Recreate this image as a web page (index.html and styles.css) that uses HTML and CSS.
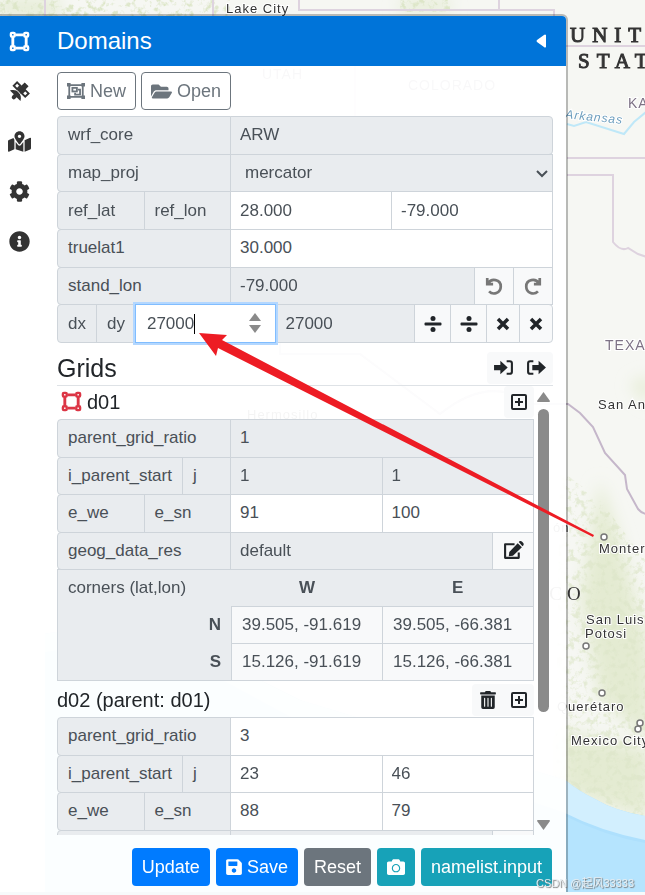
FILE: index.html
```html
<!DOCTYPE html>
<html lang="en">
<head>
    <meta charset="UTF-8">
    <meta name="viewport" content="width=device-width, initial-scale=1.0">
    <title>Domains</title>
    <link rel="stylesheet" href="styles.css">
</head>
<body>
    <!-- shared icon shapes -->
    <svg class="sprite" aria-hidden="true">
        <symbol id="i-domain" viewBox="0 0 22 22">
            <g fill="none" stroke="currentColor">
                <path d="M7 4h8M7 18h8M4 7v8M18 7v8" stroke-width="3"/>
                <g stroke-width="2.500">
                    <rect x="2" y="2" width="4" height="4" rx="1"/>
                    <rect x="16" y="2" width="4" height="4" rx="1"/>
                    <rect x="2" y="16" width="4" height="4" rx="1"/>
                    <rect x="16" y="16" width="4" height="4" rx="1"/>
                </g>
            </g>
        </symbol>
        <symbol id="i-satellite" viewBox="0 0 22 22">
            <g fill="none" stroke="currentColor" stroke-width="2">
                <path d="M8.500 1.500l3.500 3.500-3.500 3.500L5 5zM17 9.500l3.500 3.500-3.500 3.500-3.500-3.500z"/>
            </g>
            <path fill="currentColor" d="M14.500 3.500l4 4-6 6-4-4zM16.500 1.500l4 4-2 2-4-4zM1 10c4-1 6.500-.5 9 2 2.500 2.500 3 5 2 9l-4-4-1.500 1.500a2 2 0 0 1-3-3L5 14z"/>
        </symbol>
        <symbol id="i-map" viewBox="0 0 576 512"><path fill="currentColor" d="M288 0c-69.59 0-126 56.41-126 126 0 56.26 82.35 158.8 113.9 196.02 6.39 7.54 17.82 7.54 24.2 0C331.65 284.8 414 182.26 414 126 414 56.41 357.59 0 288 0zm0 168c-23.2 0-42-18.8-42-42s18.8-42 42-42 42 18.8 42 42-18.8 42-42 42zM20.12 215.95A32.006 32.006 0 0 0 0 245.66v250.32c0 11.32 11.43 19.06 21.94 14.86L160 448V214.92c-8.84-15.98-16.07-31.54-21.25-46.42L20.12 215.95zM288 359.67c-14.07 0-27.38-6.18-36.51-16.96-19.66-23.2-40.57-49.62-59.49-76.72v182l192 64V266c-18.92 27.09-39.82 53.52-59.49 76.72-9.13 10.77-22.44 16.95-36.51 16.95zm266.06-198.51L416 224v288l139.88-55.95A31.996 31.996 0 0 0 576 426.34V176.02c0-11.32-11.43-19.06-21.94-14.86z"/></symbol>
        <symbol id="i-cog" viewBox="0 0 512 512"><path fill="currentColor" d="M487.4 315.7l-42.6-24.6c4.3-23.2 4.3-47 0-70.2l42.6-24.6c4.9-2.8 7.1-8.6 5.5-14-11.1-35.6-30-67.8-54.7-94.6-3.8-4.1-10-5.1-14.8-2.3L380.8 110c-17.9-15.4-38.5-27.3-60.8-35.1V25.8c0-5.6-3.9-10.5-9.4-11.7-36.7-8.2-74.3-7.8-109.2 0-5.5 1.2-9.4 6.1-9.4 11.7V75c-22.2 7.9-42.8 19.8-60.8 35.1L88.7 85.5c-4.9-2.8-11-1.9-14.8 2.3-24.7 26.7-43.6 58.9-54.7 94.6-1.7 5.4.6 11.2 5.5 14L67.3 221c-4.3 23.2-4.3 47 0 70.2l-42.6 24.6c-4.9 2.8-7.1 8.6-5.5 14 11.1 35.6 30 67.8 54.7 94.6 3.8 4.1 10 5.1 14.8 2.3l42.6-24.6c17.9 15.4 38.5 27.3 60.8 35.1v49.2c0 5.6 3.9 10.5 9.4 11.7 36.7 8.2 74.3 7.8 109.2 0 5.5-1.2 9.4-6.1 9.4-11.7v-49.2c22.2-7.9 42.8-19.8 60.8-35.1l42.6 24.6c4.9 2.8 11 1.9 14.8-2.3 24.7-26.7 43.6-58.9 54.7-94.6 1.500-5.500-.7-11.300-5.600-14.100zM256 336c-44.1 0-80-35.900-80-80s35.900-80 80-80 80 35.900 80 80-35.900 80-80 80z"/></symbol>
        <symbol id="i-info" viewBox="0 0 512 512"><path fill="currentColor" d="M256 8C119.043 8 8 119.083 8 256c0 136.997 111.043 248 248 248s248-111.003 248-248C504 119.083 392.957 8 256 8zm0 110c23.196 0 42 18.804 42 42s-18.804 42-42 42-42-18.804-42-42 18.804-42 42-42zm56 254c0 6.627-5.373 12-12 12h-88c-6.627 0-12-5.373-12-12v-24c0-6.627 5.373-12 12-12h12v-64h-12c-6.627 0-12-5.373-12-12v-24c0-6.627 5.373-12 12-12h64c6.627 0 12 5.373 12 12v100h12c6.627 0 12 5.373 12 12v24z"/></symbol>
        <symbol id="i-group" viewBox="0 0 20 18">
            <g fill="none" stroke="currentColor" stroke-width="2">
                <path d="M3 2.500h14M3 15.500h14M2.500 3v12M17.500 3v12"/>
                <rect x="6" y="5.500" width="5" height="4"/>
                <path d="M12 7.500h2.500V13H9v-2"/>
            </g>
            <path fill="currentColor" d="M0 0h4v4H0zM16 0h4v4h-4zM0 14h4v4H0zM16 14h4v4h-4z"/>
        </symbol>
        <symbol id="i-folder" viewBox="0 0 576 512"><path fill="currentColor" d="M572.694 292.093L500.27 416.248A63.997 63.997 0 0 1 444.989 448H45.025c-18.523 0-30.064-20.093-20.731-36.093l72.424-124.155A64 64 0 0 1 152 256h399.964c18.523 0 30.064 20.093 20.73 36.093zM152 224h328v-48c0-26.510-21.490-48-48-48H272l-64-64H48C21.490 64 0 85.490 0 112v278.046l69.077-118.418C86.214 242.250 117.989 224 152 224z"/></symbol>
        <symbol id="i-undo" viewBox="0 0 20 20"><path fill="none" stroke="currentColor" stroke-width="3" d="M2.500 1v7H9M3.500 7C7 1 17.500 2.500 17.500 10.500 17.500 18 9 20.500 4.500 16"/></symbol>
        <symbol id="i-divide" viewBox="0 0 18 18"><path fill="currentColor" d="M1.500 7.500h15a1 1 0 0 1 1 1v1a1 1 0 0 1-1 1h-15a1 1 0 0 1-1-1v-1a1 1 0 0 1 1-1z"/><circle cx="9" cy="3.500" r="2.500" fill="currentColor"/><circle cx="9" cy="14.500" r="2.500" fill="currentColor"/></symbol>
        <symbol id="i-times" viewBox="0 0 16 16"><path stroke="currentColor" stroke-width="3.500" d="M3 3l10 10M13 3L3 13"/></symbol>
        <symbol id="i-import" viewBox="0 0 20 16"><path fill="currentColor" d="M1 5.500h6V1.500l7 6.500-7 6.500v-4H1z"/><path fill="none" stroke="currentColor" stroke-width="2" stroke-linejoin="round" d="M13 2h3q2 0 2 2v8q0 2-2 2h-3"/></symbol>
        <symbol id="i-export" viewBox="0 0 20 16"><path fill="currentColor" d="M6 5.500h6V1.500l7 6.500-7 6.500v-4H6z"/><path fill="none" stroke="currentColor" stroke-width="2" stroke-linejoin="round" d="M7 2H4Q2 2 2 4v8q0 2 2 2h3"/></symbol>
        <symbol id="i-plus" viewBox="0 0 16 16"><rect x="1" y="1" width="14" height="14" rx="1" fill="none" stroke="currentColor" stroke-width="2"/><path stroke="currentColor" stroke-width="2" d="M8 4v8M4 8h8"/></symbol>
        <symbol id="i-edit" viewBox="0 0 20 18"><path fill="none" stroke="currentColor" stroke-width="2" stroke-linejoin="round" d="M11 3H2v13h13v-5"/><path fill="currentColor" d="M14 2l4 4-8.500 8-4 .5.500-4zM15 1l1-1q1-.5 2 .5l1.500 1.500q.5 1 0 2L18.500 5z"/></symbol>
        <symbol id="i-trash" viewBox="0 0 448 512"><path fill="currentColor" d="M32 464a48 48 0 0 0 48 48h288a48 48 0 0 0 48-48V128H32zm272-256a16 16 0 0 1 32 0v224a16 16 0 0 1-32 0zm-96 0a16 16 0 0 1 32 0v224a16 16 0 0 1-32 0zm-96 0a16 16 0 0 1 32 0v224a16 16 0 0 1-32 0zM432 32H312l-9.400-18.700A24 24 0 0 0 281.100 0H166.800a23.720 23.720 0 0 0-21.400 13.300L136 32H16A16 16 0 0 0 0 48v32a16 16 0 0 0 16 16h416a16 16 0 0 0 16-16V48a16 16 0 0 0-16-16z"/></symbol>
        <symbol id="i-save" viewBox="0 0 448 512"><path fill="currentColor" d="M433.941 129.941l-83.882-83.882A48 48 0 0 0 316.118 32H48C21.490 32 0 53.490 0 80v352c0 26.510 21.490 48 48 48h352c26.510 0 48-21.490 48-48V163.882a48 48 0 0 0-14.059-33.941zM224 416c-35.346 0-64-28.654-64-64 0-35.346 28.654-64 64-64s64 28.654 64 64c0 35.346-28.654 64-64 64zm96-304.520V212c0 6.627-5.373 12-12 12H76c-6.627 0-12-5.373-12-12V108c0-6.627 5.373-12 12-12h228.520c3.183 0 6.235 1.264 8.485 3.515l3.480 3.480A11.996 11.996 0 0 1 320 111.480z"/></symbol>
        <symbol id="i-camera" viewBox="0 0 512 512"><path fill="currentColor" d="M512 144v288c0 26.500-21.500 48-48 48H48c-26.500 0-48-21.500-48-48V144c0-26.500 21.500-48 48-48h88l12.300-32.900c7-18.700 24.900-31.100 44.900-31.100h125.500c20 0 37.900 12.400 44.900 31.100L376 96h88c26.500 0 48 21.500 48 48zM376 288c0-66.200-53.800-120-120-120s-120 53.800-120 120 53.800 120 120 120 120-53.800 120-120zm-32 0c0 48.500-39.500 88-88 88s-88-39.500-88-88 39.500-88 88-88 88 39.500 88 88z"/></symbol>
    </svg>

    <div class="app">
        <svg class="map" viewBox="0 0 645 892" preserveAspectRatio="xMinYMin slice">
            <defs>
                <filter id="relief" x="0" y="0" width="100%" height="100%">
                    <feTurbulence type="fractalNoise" baseFrequency="0.16" numOctaves="4" seed="8"/>
                    <feColorMatrix values="0 0 0 0 0.72  0 0 0 0 0.79  0 0 0 0 0.58  0 5 0 0 -2.500"/>
                    <feComposite in2="SourceGraphic" operator="in"/>
                </filter>
                <filter id="soft"><feGaussianBlur stdDeviation="8"/></filter>
            </defs>
            <rect width="645" height="892" fill="#f6f7f3"/>
            <g fill="#e4ebd2" filter="url(#soft)">
                <path d="M0 0h60v16H0zM400 0h50v12h-50z"/>
                <path d="M600 480l20 60 30 110v90l-50-40-20-100z"/>
                <path d="M560 730l90 20v70l-90-30z"/>
                <path d="M630 385l20-10v30z"/>
            </g>
            <g fill="#fff" filter="url(#relief)">
                <path d="M0 0h230v16H0zM400 0h50v12h-50z"/>
                <path opacity=".7" d="M560 470l40 30 45 60v260l-90-40z"/>
            </g>
            <path fill="#aee0fd" d="M0 640l140-20 160 80 265 80q15 12 30 19 20 12 50 17v76H0z"/>
            <path fill="#d2effe" d="M0 640l140-20 160 80 265 80q15 12 30 19 20 12 50 17v24q-45-9-80-27L300 722 140 636 0 660z"/>
            <path fill="#b5e4fe" d="M0 670l140-20 160 90 265 76q40 20 80 27v49H0z"/>
            <g fill="none" stroke="#ded3df" stroke-width="2">
                <path d="M45 0v16M213 0v16M299 0v10h255v36h91M499 0v10M567 158h78M567 175h46v67q8 10 15 6l10 6 12 4M355 65v80"/>
            </g>
            <path fill="none" stroke="#c5b7ca" stroke-width="2" d="M100 330h180v24h80l80 60q50-40 90-10h38l12 9 13 14 12 26 20 22 2 14 11 20q5 6 12 5"/>
            <path fill="none" stroke="#bfe8f8" stroke-width="2" d="M567 124l7 2 12-4 38 12 10-12 12-10"/>
            <g class="places">
                <text x="226" y="13">Lake City</text>
                <text class="state" x="262" y="79">UTAH</text>
                <text class="state" x="408" y="90">COLORADO</text>
                <text class="state" x="628" y="108">KANSAS</text>
                <text class="state" x="605" y="350">TEXAS</text>
                <text class="country" x="570" y="42">UNITED</text>
                <text class="country" x="578" y="68">STATES</text>
                <text class="country mexico" x="538" y="600">ICO</text>
                <text class="river" x="565" y="118" transform="rotate(6 565 118)">Arkansas</text>
                <text x="247" y="419">Hermosillo</text>
                <text x="598" y="409">San Antonio</text>
                <text x="553" y="532">ón</text>
                <text x="599" y="553">Monterrey</text>
                <text x="586" y="624">San Luis</text>
                <text x="585" y="638">Potosi</text>
                <text x="557" y="711">Querétaro</text>
                <text x="571" y="745">Mexico City</text>
            </g>
            <g fill="#fff" stroke="#777" stroke-width="1.500">
                <circle cx="604" cy="537" r="3"/>
                <circle cx="586" cy="646" r="3"/>
                <circle cx="602" cy="693" r="3"/>
                <circle cx="638" cy="729" r="3"/>
                <circle cx="640" cy="723" r="3"/>
            </g>
        </svg>

        <div class="sidebar">
            <nav class="tabs">
                <a class="tab active" href="#domains" aria-label="Domains"><svg class="icon-md"><use href="#i-domain"/></svg></a>
                <a class="tab" href="#satellite" aria-label="Satellite"><svg class="icon-md"><use href="#i-satellite"/></svg></a>
                <a class="tab" href="#map" aria-label="Map"><svg class="icon-lg"><use href="#i-map"/></svg></a>
                <a class="tab" href="#settings" aria-label="Settings"><svg class="icon-md"><use href="#i-cog"/></svg></a>
                <a class="tab" href="#info" aria-label="Info"><svg class="icon-md"><use href="#i-info"/></svg></a>
            </nav>

            <main class="pane" id="domains">
                <header class="pane-header">
                    <h1>Domains</h1>
                    <button class="collapse" aria-label="Collapse"><svg width="10" height="14" viewBox="0 0 10 14"><path fill="currentColor" d="M10 1v12q-1 1-2 0L1 8Q0 7 1 6l7-5q1-1 2 0z"/></svg></button>
                </header>

                <div class="pane-body">
                    <div class="toolbar">
                        <button class="btn btn-outline"><svg class="icon-sm"><use href="#i-group"/></svg>New</button>
                        <button class="btn btn-outline"><svg class="icon-md"><use href="#i-folder"/></svg>Open</button>
                    </div>

                    <div class="fields main-fields">
                        <div class="row">
                            <div class="names"><label for="wrf_core">wrf_core</label></div>
                            <input id="wrf_core" value="ARW" disabled>
                        </div>
                        <div class="row">
                            <div class="names"><label for="map_proj">map_proj</label></div>
                            <div class="select-wrap">
                                <select id="map_proj"><option>mercator</option></select>
                                <svg class="chevron" viewBox="0 0 12 8"><path fill="none" stroke="currentColor" stroke-width="2" d="M1 1l5 5 5-5"/></svg>
                            </div>
                        </div>
                        <div class="row">
                            <div class="names"><label for="ref_lat">ref_lat</label><label for="ref_lon">ref_lon</label></div>
                            <input id="ref_lat" value="28.000">
                            <input id="ref_lon" value="-79.000">
                        </div>
                        <div class="row">
                            <div class="names"><label for="truelat1">truelat1</label></div>
                            <input id="truelat1" value="30.000">
                        </div>
                        <div class="row">
                            <div class="names"><label for="stand_lon">stand_lon</label></div>
                            <input id="stand_lon" value="-79.000" disabled>
                            <button class="addon muted" aria-label="Undo"><svg class="icon-sm"><use href="#i-undo"/></svg></button>
                            <button class="addon muted" aria-label="Redo"><svg class="icon-sm flip"><use href="#i-undo"/></svg></button>
                        </div>
                        <div class="row">
                            <div class="names compact"><label for="dx">dx</label><label for="dy">dy</label></div>
                            <div class="spin focused">
                                <input id="dx" type="number" value="27000">
                                <span class="caret"></span>
                                <svg class="spinner" viewBox="0 0 12 20"><path fill="#8a8a8a" d="M6 0l6 8H0zM0 12h12l-6 8z"/></svg>
                            </div>
                            <input id="dy" value="27000" disabled>
                            <button class="addon medium" aria-label="Divide dx"><svg class="icon-sm"><use href="#i-divide"/></svg></button>
                            <button class="addon medium" aria-label="Divide dy"><svg class="icon-sm"><use href="#i-divide"/></svg></button>
                            <button class="addon narrow" aria-label="Multiply dx"><svg class="icon-xs"><use href="#i-times"/></svg></button>
                            <button class="addon narrow" aria-label="Multiply dy"><svg class="icon-xs"><use href="#i-times"/></svg></button>
                        </div>
                    </div>

                    <div class="section-title">
                        <h2>Grids</h2>
                        <div class="actions">
                            <button aria-label="Import"><svg class="icon-md"><use href="#i-import"/></svg></button>
                            <button aria-label="Export"><svg class="icon-md"><use href="#i-export"/></svg></button>
                        </div>
                    </div>

                    <div class="grids">
                        <div class="grid-list">
                            <section class="grid">
                                <div class="grid-title">
                                    <h3><svg class="icon-md red"><use href="#i-domain"/></svg>d01</h3>
                                    <div class="actions">
                                        <button aria-label="Add nested grid"><svg class="icon-xs"><use href="#i-plus"/></svg></button>
                                    </div>
                                </div>
                                <div class="fields">
                                    <div class="row">
                                        <div class="names"><label for="ratio1">parent_grid_ratio</label></div>
                                        <input id="ratio1" value="1" disabled>
                                    </div>
                                    <div class="row">
                                        <div class="names uneven"><label for="i1">i_parent_start</label><label for="j1">j</label></div>
                                        <input id="i1" value="1" disabled>
                                        <input id="j1" value="1" disabled>
                                    </div>
                                    <div class="row">
                                        <div class="names"><label for="we1">e_we</label><label for="sn1">e_sn</label></div>
                                        <input id="we1" value="91">
                                        <input id="sn1" value="100">
                                    </div>
                                    <div class="row">
                                        <div class="names"><label for="geog1">geog_data_res</label></div>
                                        <input id="geog1" value="default" disabled>
                                        <button class="addon wide" aria-label="Edit"><svg class="icon-md"><use href="#i-edit"/></svg></button>
                                    </div>
                                </div>
                                <table class="corners">
                                    <thead>
                                        <tr><td class="caption">corners (lat,lon)</td><th scope="col">W</th><th scope="col">E</th></tr>
                                    </thead>
                                    <tbody>
                                        <tr><th scope="row">N</th><td>39.505, -91.619</td><td>39.505, -66.381</td></tr>
                                        <tr><th scope="row">S</th><td>15.126, -91.619</td><td>15.126, -66.381</td></tr>
                                    </tbody>
                                </table>
                            </section>

                            <section class="grid">
                                <div class="grid-title">
                                    <h3>d02 (parent: d01)</h3>
                                    <div class="actions">
                                        <button aria-label="Delete grid"><svg class="icon-sm"><use href="#i-trash"/></svg></button>
                                        <button aria-label="Add nested grid"><svg class="icon-xs"><use href="#i-plus"/></svg></button>
                                    </div>
                                </div>
                                <div class="fields">
                                    <div class="row">
                                        <div class="names"><label for="ratio2">parent_grid_ratio</label></div>
                                        <input id="ratio2" value="3">
                                    </div>
                                    <div class="row">
                                        <div class="names uneven"><label for="i2">i_parent_start</label><label for="j2">j</label></div>
                                        <input id="i2" value="23">
                                        <input id="j2" value="46">
                                    </div>
                                    <div class="row">
                                        <div class="names"><label for="we2">e_we</label><label for="sn2">e_sn</label></div>
                                        <input id="we2" value="88">
                                        <input id="sn2" value="79">
                                    </div>
                                    <div class="row">
                                        <div class="names"><label for="geog2">geog_data_res</label></div>
                                        <input id="geog2" value="default" disabled>
                                        <button class="addon wide" aria-label="Edit"><svg class="icon-md"><use href="#i-edit"/></svg></button>
                                    </div>
                                </div>
                            </section>
                        </div>
                        <div class="scrollbar">
                            <svg width="13" height="10" viewBox="0 0 13 10"><path fill="#8a8a8a" d="M6.500 0L13 9q0 1-1 1H1q-1 0-1-1z"/></svg>
                            <div class="track"><div class="thumb"></div></div>
                            <svg width="13" height="10" viewBox="0 0 13 10"><path fill="#8a8a8a" d="M6.500 10L13 1q0-1-1-1H1Q0 0 0 1z"/></svg>
                        </div>
                    </div>

                    <footer class="footer">
                        <button class="btn btn-primary">Update</button>
                        <button class="btn btn-primary"><svg class="icon-save"><use href="#i-save"/></svg>Save</button>
                        <button class="btn btn-secondary">Reset</button>
                        <button class="btn btn-info" aria-label="Screenshot"><svg class="icon-sm"><use href="#i-camera"/></svg></button>
                        <button class="btn btn-info">namelist.input</button>
                    </footer>
                </div>
            </main>
        </div>

        <!-- pointer from the map to the dx field -->
        <svg class="arrow" viewBox="0 0 645 892" preserveAspectRatio="xMinYMin slice"><path fill="#ed1c24" d="M199 333l28 2-5 5 372 195-1 2-375-189-2 8z"/></svg>
        <div class="watermark">CSDN @起风33333</div>
    </div>
</body>
</html>
```
FILE: styles.css
```css
* {
    box-sizing: border-box;
}

body {
    margin: 0;
    height: 100vh;
    overflow: hidden;
    background: #f7fafb;
    color: #212529;
    font: 17px/24px "Liberation Sans", Arial, "Noto Sans CJK SC", sans-serif;
}

h1, h2, h3 {
    margin: 0;
    font-weight: normal;
}

button, input, select {
    margin: 0;
    font: inherit;
    color: inherit;
}

button {
    cursor: pointer;
}

.sprite {
    display: none;
}

.icon-xs { width: 16px; height: 16px; }
.icon-sm { width: 18px; height: 18px; }
.icon-md { width: 21px; height: 21px; }
.icon-lg { width: 23px; height: 21px; }
.icon-save { width: 16px; height: 18px; }
.icon-xs, .icon-sm, .icon-md, .icon-lg, .icon-save { flex: none; display: block; }
.flip { transform: scaleX(-1); }
.red { color: #dc3545; }

.app {
    position: relative;
    height: calc(100vh - 3px);
    padding-top: 16px;
    overflow: hidden;
}

/* map */
.map, .arrow {
    position: absolute;
    top: 0;
    left: 0;
    width: 100%;
    height: 100%;
}

.arrow {
    pointer-events: none;
}

.places text {
    font-size: 13px;
    letter-spacing: 1px;
    fill: #333;
    stroke: #fff;
    stroke-width: 2px;
    paint-order: stroke;
}

.places .state {
    font-size: 14px;
    fill: #7d7285;
}

.places .country {
    font-family: "Liberation Serif", "Times New Roman", serif;
    font-size: 21px;
    letter-spacing: 7px;
    stroke: #333;
    stroke-width: 1px;
}

.places .mexico {
    font-size: 19px;
    letter-spacing: 5px;
    stroke-width: 0;
}

.places .river {
    font-size: 12px;
    font-style: italic;
    fill: #6b9dbd;
}

/* sidebar */
.sidebar {
    position: relative;
    z-index: 0;
    display: flex;
    height: 100%;
    margin-right: 79px;
    border-radius: 0 4px 0 0;
    box-shadow: 0 0 0 2px rgba(0, 0, 0, 0.25);
    overflow: hidden;
    background: rgba(255, 255, 255, 0.95);
}

.tabs {
    width: 45px;
    background: #fff;
}

.tab {
    display: flex;
    align-items: center;
    height: 50px;
    padding-left: 9px;
    color: #333;
}

.tab .icon-lg {
    margin-left: -1px;
}

.tab.active {
    background: #0074d9;
    color: #fff;
}

.pane {
    flex: 1;
    min-width: 0;
    display: flex;
    flex-direction: column;
}

.pane-header {
    display: flex;
    align-items: center;
    justify-content: space-between;
    height: 50px;
    padding: 0 20px 0 12px;
    background: #0074d9;
    color: #fff;
}

.pane-header h1 {
    font-size: 24px;
}

.collapse {
    display: flex;
    padding: 0;
    border: 0;
    background: none;
}

.pane-body {
    flex: 1;
    min-height: 0;
    display: flex;
    flex-direction: column;
    padding: 6px 13px 6px 12px;
}

.toolbar {
    display: flex;
    gap: 5px;
    margin-bottom: 6px;
}

.btn {
    display: flex;
    align-items: center;
    gap: 5px;
    height: 38px;
    padding: 0 9px;
    border: 1px solid transparent;
    border-radius: 4px;
    font-size: 18px;
    color: #fff;
}

.btn-outline {
    background: none;
    border-color: #6c757d;
    color: #6c757d;
}

.btn-primary { background: #007bff; }
.btn-secondary { background: #6c757d; }
.btn-info { background: #17a2b8; }

/* rows of fields, neighbours share their border */
.fields {
    display: grid;
    grid-auto-rows: 1fr;
    min-height: 150px;
    color: #495057;
}

.main-fields {
    min-height: 226px;
}

.row {
    display: flex;
    margin-bottom: -1px;
}

.row > *, .names > label {
    margin-right: -1px;
}

.row > :last-child, .names > :last-child {
    margin-right: 0;
}

.row > .names {
    display: flex;
    width: 174px;
    margin-right: -1px;
}

.row > .compact {
    width: auto;
}

.names label {
    flex: 1;
    display: flex;
    align-items: center;
    padding: 0 10px;
    border: 1px solid #ced4da;
    background: #e9ecef;
    white-space: nowrap;
}

.names label:first-child {
    border-radius: 4px 0 0 4px;
}

.uneven label:first-child {
    flex: none;
}

.row input, .row select {
    flex: 1;
    width: 0;
    min-width: 0;
    height: 100%;
    padding: 0 9px;
    border: 1px solid #ced4da;
    border-radius: 0;
    background: #fff;
    outline: 0;
}

.row > input {
    height: auto;
}

.row input:disabled {
    background: #e9ecef;
    color: #495057;
}

.select-wrap, .spin {
    position: relative;
    flex: 1 1 22px;
    display: flex;
}

.row select {
    appearance: none;
    padding-left: 14px;
    background: #e9ecef;
}

.chevron {
    position: absolute;
    right: 5px;
    top: 50%;
    width: 12px;
    height: 8px;
    margin-top: -3px;
}

.spin input {
    appearance: textfield;
    padding-left: 11px;
}

.spin input::-webkit-inner-spin-button {
    display: none;
}

.focused {
    z-index: 1;
    box-shadow: 0 0 0 2px #b3d7ff;
}

.focused input {
    border-color: #80bdff;
}

.caret {
    position: absolute;
    left: 59px;
    top: 10px;
    width: 1px;
    height: 20px;
    background: #000;
}

.spinner {
    position: absolute;
    right: 15px;
    top: 9px;
    width: 12px;
    height: 20px;
}

.addon {
    display: flex;
    align-items: center;
    justify-content: center;
    width: 40px;
    padding: 0;
    border: 1px solid #ced4da;
    background: #f8f9fa;
    color: #212529;
}

.muted { color: #777; }
.medium { width: 37px; }
.narrow { width: 34px; }
.wide { width: 42px; }

.main-fields .row:first-child > :last-child,
.main-fields .row:last-child > :last-child {
    border-radius: 0 4px 4px 0;
}

/* grids */
.section-title, .grid-title {
    display: flex;
    align-items: center;
    justify-content: space-between;
}

.section-title {
    height: 36px;
    margin-top: 8px;
    border-bottom: 1px solid #dee2e6;
}

.section-title h2 {
    font-size: 25px;
}

.grid-title {
    height: 33px;
    padding-bottom: 2px;
}

.grid-title h3 {
    display: flex;
    align-items: center;
    gap: 5px;
    font-size: 20px;
}

.grid-title .red {
    margin-left: 4px;
}

.actions {
    display: flex;
    height: 32px;
    border-radius: 4px;
    background: #f8f9fa;
}

.actions button {
    display: flex;
    align-items: center;
    padding: 0 7px;
    border: 0;
    background: none;
}

.section-title .actions button {
    padding: 0 6px;
}

.grids {
    flex: 1;
    min-height: 0;
    display: flex;
}

.grid-list {
    flex: 1;
    overflow-y: auto;
    scrollbar-width: none;
}

.grid + .grid {
    margin-top: 3px;
}

.scrollbar {
    display: flex;
    flex-direction: column;
    align-items: center;
    gap: 7px;
    width: 19px;
    padding: 6px 0 5px;
}

.track {
    flex: 1;
}

.thumb {
    width: 11px;
    height: 75%;
    border-radius: 6px;
    background: #8a8a8a;
}

.corners {
    width: 100%;
    table-layout: fixed;
    border-collapse: collapse;
    border: 1px solid #ced4da;
    background: #e9ecef;
    color: #495057;
}

.corners th, .corners td {
    height: 37px;
    padding: 0 10px;
    text-align: left;
    white-space: nowrap;
}

.corners thead th {
    text-align: center;
}

.corners tbody th {
    text-align: right;
}

.corners .caption {
    width: 174px;
}

.corners tbody td {
    border: 1px solid #ced4da;
    background: #f8f9fa;
}

.footer {
    display: flex;
    justify-content: flex-end;
    gap: 6px;
    padding-top: 13px;
}

.footer .btn:last-child {
    margin-right: 1px;
}

.watermark {
    position: absolute;
    right: 11px;
    bottom: 0;
    font-size: 11px;
    line-height: 18px;
    color: #e8eef2;
    text-shadow: 1px 1px 1px #777;
}
```
